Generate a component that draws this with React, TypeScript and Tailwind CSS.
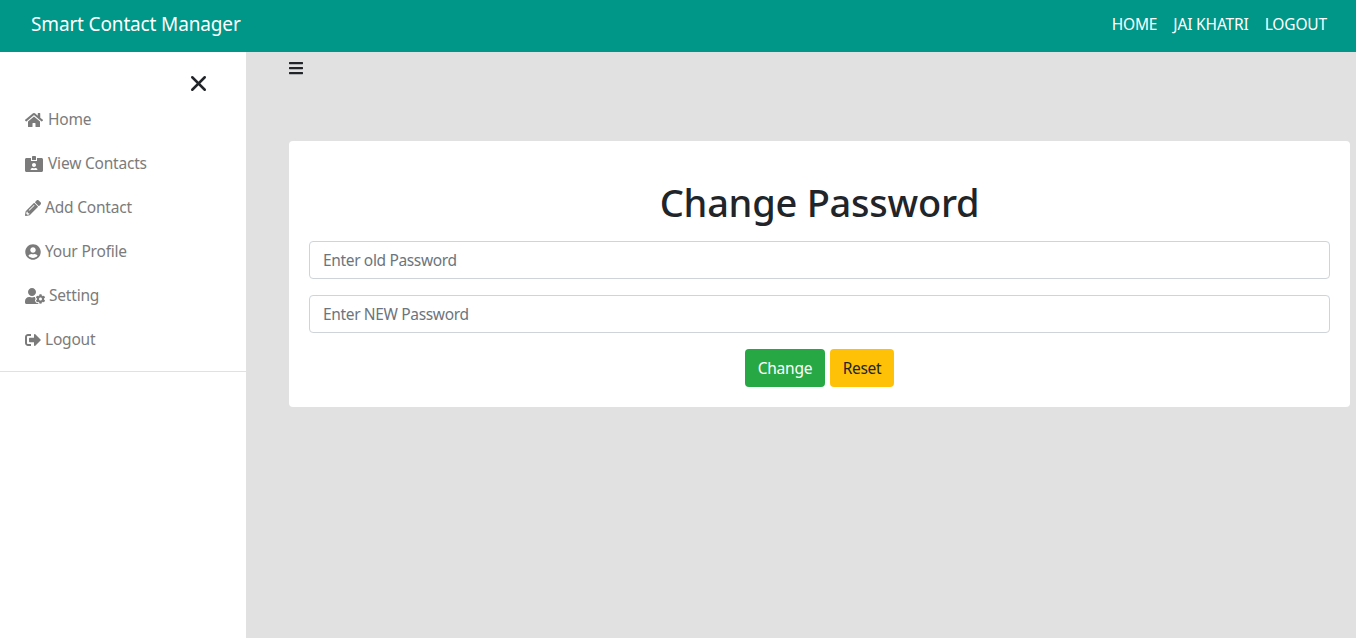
import { FaHome, FaIdCardAlt, FaPencilAlt, FaUserCircle, FaUserCog, FaSignOutAlt, FaBars } from 'react-icons/fa'
import { X } from 'lucide-react'

const menu = [
  { name: 'Home', icon: FaHome, size: 'text-[18px]', gap: 'gap-[5px]' },
  { name: 'View Contacts', icon: FaIdCardAlt, size: 'text-[18px]', gap: 'gap-[5px]' },
  { name: 'Add Contact', icon: FaPencilAlt, size: 'text-[16px]', gap: 'gap-[4px]' },
  { name: 'Your Profile', icon: FaUserCircle, size: 'text-[16px]', gap: 'gap-[4px]' },
  { name: 'Setting', icon: FaUserCog, size: 'text-[20px]', gap: 'gap-[4px]' },
  { name: 'Logout', icon: FaSignOutAlt, size: 'text-[16px]', gap: 'gap-[4px]' },
]

export default function App() {
  return (
    <div className="flex h-[638px] flex-col overflow-hidden font-['Noto_Sans',sans-serif] text-[16px] text-[#212529]">
      <nav className="flex h-[52px] shrink-0 items-center justify-between bg-[#009688] pb-[3px] pl-[31px] pr-[29px] text-white">
        <a href="#" className="text-[19px] tracking-[-0.15px]">Smart Contact Manager</a>
        <div className="flex gap-[16px] text-[15.5px] tracking-[-0.15px]">
          <a href="#">HOME</a>
          <a href="#">JAI KHATRI</a>
          <a href="#">LOGOUT</a>
        </div>
      </nav>

      <div className="flex flex-1">
        <aside className="w-[246px] shrink-0 bg-white">
          <div className="flex h-[46px] items-end justify-end pr-[35px]">
            <X size={25} strokeWidth={2.4} className="mb-[2px] text-[#212529]" />
          </div>
          <ul className="border-b border-[#dee2e6] pb-[9px]">
            {menu.map((item) => (
              <li key={item.name} className="flex h-[44px] items-center pl-[25px]">
                <a href="#" className={`flex items-center ${item.gap} text-[15.5px] tracking-[-0.2px] text-[#7b7b7b]`}>
                  <item.icon className={item.size} />
                  {item.name}
                </a>
              </li>
            ))}
          </ul>
        </aside>

        <main className="flex-1 bg-[#e1e1e1] pl-[42px] pr-[6px]">
          <div className="flex h-[89px] items-start pt-[8px]">
            <FaBars className="text-[16px]" />
          </div>
          <div className="ml-[1px] h-[266px] rounded-[4px] bg-white px-[20px] pt-[35px]">
            <h1 className="h-[65px] text-center text-[38px] leading-[52px] font-medium tracking-[-0.25px]">Change Password</h1>
            <form className="flex flex-col gap-[16px]">
              <input
                placeholder="Enter old Password"
                className="h-[38px] rounded-[4px] border border-[#ced4da] pl-[13px] pr-[12px] text-[15.5px] tracking-[-0.35px] placeholder:text-[#6c757d]"
              />
              <input
                placeholder="Enter NEW Password"
                className="h-[38px] rounded-[4px] border border-[#ced4da] pl-[13px] pr-[12px] text-[15.5px] tracking-[-0.35px] placeholder:text-[#6c757d]"
              />
              <div className="flex justify-center gap-[5px]">
                <button type="button" className="h-[38px] w-[80px] rounded-[4px] bg-[#28a745] pt-[1px] text-[15.5px] tracking-[-0.2px] text-white">Change</button>
                <button type="reset" className="h-[38px] w-[64px] rounded-[4px] bg-[#ffc107] pt-[1px] text-[15.5px] tracking-[-0.35px] text-[#212529]">Reset</button>
              </div>
            </form>
          </div>
        </main>
      </div>
    </div>
  )
}
